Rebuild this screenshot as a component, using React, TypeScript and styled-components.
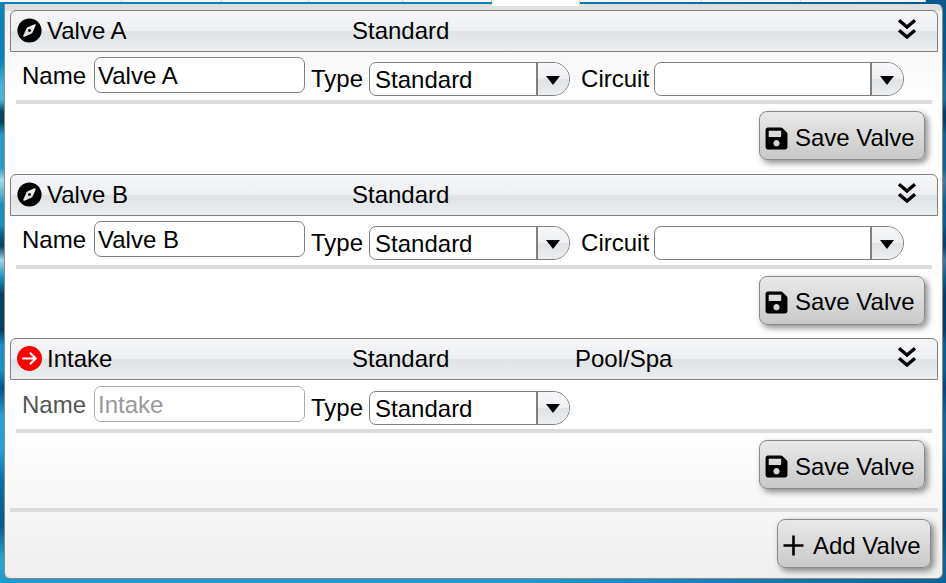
import React from 'react';
import styled, { createGlobalStyle } from 'styled-components';
import { FaCompass, FaSave } from 'react-icons/fa';

const GlobalStyle = createGlobalStyle`
  html, body {
    margin: 0;
    padding: 0;
    height: 100%;
    overflow: hidden;
  }
  body {
    font-family: "Liberation Sans", Arial, sans-serif;
    font-size: 24px;
    color: #000;
  }
`;

const Page = styled.div`
  width: 946px;
  height: 583px;
  box-sizing: border-box;
  display: flex;
  flex-direction: column;
  background:
    linear-gradient(90deg, rgba(8, 60, 110, 0) 55%, rgba(6, 60, 110, 0.6) 100%),
    linear-gradient(180deg, #0b82b5 0, #0b82b5 60px, #4cb2d8 85px, #4cb2d8 100px, #06415f 112px, #06415f 122px, #2a9bc5 135px, #2a9bc5 168px, #a5dce8 180px, #1c8fba 205px, #1c8fba 225px, #0a5d85 235px, #0a3f60 246px, #9fd5e5 260px, #1c8fba 278px, #053c5f 295px, #053c5f 330px, #1a92c4 345px, #1a92c4 370px, #05508a 388px, #2aa0d0 415px, #2aa0d0 450px, #0a70a5 480px, #085a88 525px, #2fa5d0 560px, #1a9bcf 583px);
`;

const TabStrip = styled.div`
  display: flex;
  height: 3px;
  width: 926px;
`;

const Tab = styled.div<{ $w: number; $active?: boolean }>`
  width: ${(p) => p.$w}px;
  height: ${(p) => (p.$active ? 6 : 2)}px;
  flex: none;
  box-sizing: border-box;
  background: ${(p) => (p.$active ? '#fff' : '#f2f4f6')};
  border-right: 1px solid #c8d4dc;
  position: relative;
  z-index: 1;
`;

const Panel = styled.div`
  flex: none;
  margin: 1px 3px 0 4px;
  height: 575px;
  box-sizing: border-box;
  padding: 5px 4px 0 5px;
  border: 1px solid #8a8a8a;
  border-top-color: #dcdcdc;
  border-radius: 0 6px 6px 6px;
  background: linear-gradient(180deg, #e0e0e0 0, #e0e0e0 6px, #f2f2f2 6px, #fff 98px, #fff 420px, #efefef 100%);
  display: flex;
  flex-direction: column;
`;

const ValveList = styled.div`
  display: flex;
  flex-direction: column;
  margin-bottom: 5.4px;
`;

const ValveBlock = styled.section`
  height: 164.2px;
  box-sizing: border-box;
  display: flex;
  flex-direction: column;
`;

const Header = styled.div`
  height: 42px;
  flex: none;
  box-sizing: border-box;
  border: 1px solid #808080;
  border-radius: 6px 6px 0 0;
  display: grid;
  grid-template-columns: 36px 305px 223px 1fr 48px;
  align-items: center;
  background: linear-gradient(180deg, #f4f6f8 0%, #eef0f3 48%, #dfe3e6 52%, #eceef0 100%);
`;

const IconCell = styled.span`
  display: flex;
  align-items: center;
  justify-content: center;
  margin-top: -2px;
`;

const HeaderText = styled.span`
  white-space: nowrap;
  line-height: 28px;
`;

const Toggle = styled.span`
  display: flex;
  margin-top: -5px;
  margin-left: 8px;
`;

const FieldRow = styled.div`
  height: 48.4px;
  flex: none;
  box-sizing: border-box;
  display: flex;
  align-items: flex-start;
  padding: 5.2px 0 0 12px;
`;

const Field = styled.div<{ $low?: boolean; $gap: number; $mr: number }>`
  display: flex;
  align-items: center;
  gap: ${(p) => p.$gap}px;
  margin-right: ${(p) => p.$mr}px;
  padding-top: ${(p) => (p.$low ? 5 : 0)}px;
`;

const Label = styled.label<{ $disabled?: boolean; $nudge?: boolean }>`
  color: ${(p) => (p.$disabled ? '#555' : '#000')};
  line-height: 28px;
  white-space: nowrap;
  margin-top: ${(p) => (p.$nudge ? 2 : 0)}px;
`;

const TextInput = styled.input`
  width: 211px;
  height: 36px;
  box-sizing: border-box;
  border: 1px solid #808080;
  border-radius: 7px;
  background: #fff;
  padding: 2px 3px 0;
  font: inherit;
  color: #000;
  outline: none;
  &:disabled {
    border-color: #aaa;
    color: #999;
    -webkit-text-fill-color: #999;
    opacity: 1;
  }
`;

const Select = styled.div<{ $w: number }>`
  width: ${(p) => p.$w}px;
  height: 34px;
  box-sizing: border-box;
  display: flex;
  border: 1px solid #808080;
  border-radius: 7px 17px 17px 7px;
  background: #fff;
  overflow: hidden;
`;

const SelectValue = styled.div`
  flex: 1;
  padding-left: 5px;
  line-height: 34px;
  white-space: nowrap;
`;

const SelectArrow = styled.div`
  width: 33px;
  flex: none;
  border-left: 2px solid #808080;
  box-sizing: border-box;
  display: flex;
  align-items: center;
  justify-content: center;
  background: linear-gradient(180deg, #f6f7f9 0%, #eef0f3 48%, #dfe3e6 52%, #eceef0 100%);
  padding-right: 2px;
`;

const Caret = styled.span`
  width: 0;
  height: 0;
  border-left: 7.5px solid transparent;
  border-right: 7.5px solid transparent;
  border-top: 9px solid #000;
  margin-top: 2px;
`;

const Rule = styled.div<{ $inset: number }>`
  height: 4px;
  flex: none;
  background: #dcdcdc;
  margin: 0 ${(p) => p.$inset}px;
`;

const ButtonRow = styled.div<{ $right: number }>`
  display: flex;
  justify-content: flex-end;
  padding: 7px ${(p) => p.$right}px 0 0;
`;

const ActionButton = styled.button<{ $w: number }>`
  width: ${(p) => p.$w}px;
  height: 49px;
  box-sizing: border-box;
  display: flex;
  align-items: center;
  gap: 6px;
  padding: 4.6px 0 0 4px;
  border: 1px solid #888;
  border-radius: 8px;
  background: linear-gradient(180deg, #e9e9e9 0%, #c9c9c9 100%);
  box-shadow: 3px 3px 6px rgba(0, 0, 0, 0.45);
  font: inherit;
  color: #000;
  white-space: nowrap;
`;

const ArrowIcon = () => (
  <svg width="25" height="25" viewBox="0 0 24 24">
    <circle cx="12" cy="12" r="12" fill="#f00" />
    <path d="M5 12h13M12.5 6.5 18 12l-5.5 5.5" fill="none" stroke="#fff" strokeWidth="2" />
  </svg>
);

const ChevronsIcon = () => (
  <svg width="20" height="21" viewBox="0 0 20 21">
    <path d="M2 2.2 10 9l8-6.8M2 12.2l8 6.8 8-6.8" fill="none" stroke="#000" strokeWidth="3.4" />
  </svg>
);

const PlusIcon = () => (
  <svg width="25" height="25" viewBox="0 0 25 25">
    <path d="M11.5 2.5v20M1.5 12.5h20" fill="none" stroke="#000" strokeWidth="2.6" />
  </svg>
);

type Valve = {
  name: string;
  type: string;
  circuit?: string;
  intake?: boolean;
};

const valves: Valve[] = [
  { name: 'Valve A', type: 'Standard' },
  { name: 'Valve B', type: 'Standard' },
  { name: 'Intake', type: 'Standard', circuit: 'Pool/Spa', intake: true },
];

const tabs = [122, 100, 87, 94, 89, 88, 122, 99, 125];

const App: React.FC = () => (
  <>
    <GlobalStyle />
    <Page>
      <TabStrip>
        {tabs.map((w, index) => (
          <Tab key={index} $w={w} $active={index === 5} />
        ))}
      </TabStrip>
      <Panel>
        <ValveList>
          {valves.map((valve) => (
            <ValveBlock key={valve.name}>
              <Header>
                <IconCell>{valve.intake ? <ArrowIcon /> : <FaCompass size={25} />}</IconCell>
                <HeaderText>{valve.name}</HeaderText>
                <HeaderText>{valve.type}</HeaderText>
                <HeaderText>{valve.circuit}</HeaderText>
                <Toggle>
                  <ChevronsIcon />
                </Toggle>
              </Header>
              <FieldRow>
                <Field $gap={8} $mr={6}>
                  <Label $nudge $disabled={valve.intake}>Name</Label>
                  <TextInput defaultValue={valve.name} disabled={valve.intake} />
                </Field>
                <Field $low $gap={6} $mr={11}>
                  <Label>Type</Label>
                  <Select $w={201}>
                    <SelectValue>{valve.type}</SelectValue>
                    <SelectArrow>
                      <Caret />
                    </SelectArrow>
                  </Select>
                </Field>
                {!valve.intake && (
                  <Field $low $gap={5} $mr={0}>
                    <Label>Circuit</Label>
                    <Select $w={250}>
                      <SelectValue />
                      <SelectArrow>
                        <Caret />
                      </SelectArrow>
                    </Select>
                  </Field>
                )}
              </FieldRow>
              <Rule $inset={6} />
              <ButtonRow $right={13}>
                <ActionButton $w={166}>
                  <FaSave size={25} />
                  Save Valve
                </ActionButton>
              </ButtonRow>
            </ValveBlock>
          ))}
        </ValveList>
        <Rule $inset={0} />
        <ButtonRow $right={7}>
          <ActionButton $w={154}>
            <PlusIcon />
            Add Valve
          </ActionButton>
        </ButtonRow>
      </Panel>
    </Page>
  </>
);

export default App;
